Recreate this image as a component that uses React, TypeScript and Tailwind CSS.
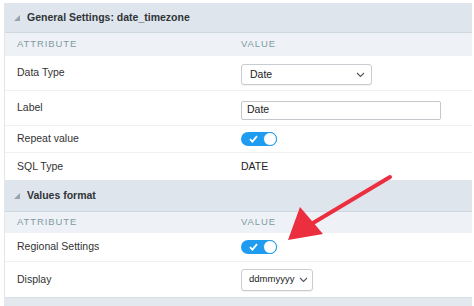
import type { ReactNode } from 'react';

const font = { fontFamily: '"Liberation Sans", Arial, sans-serif' };

function Corner() {
  return (
    <svg width="6" height="6" viewBox="0 0 6 6" className="mr-[7px] shrink-0">
      <polygon points="6,0 6,6 0,6" fill="#9aa3ab" />
    </svg>
  );
}

function SectionHeader({ title, h }: { title: string; h: string }) {
  return (
    <div className={`flex items-center border-b border-[#cfd7df] bg-[#dfe5ec] pl-[9px] ${h}`}>
      <Corner />
      <span className="text-[10.5px] font-bold text-[#2f3438]">{title}</span>
    </div>
  );
}

function ColHeader({ h }: { h: string }) {
  return (
    <div className={`grid grid-cols-[236px_1fr] items-center bg-[#eef2f6] text-[9.5px] tracking-[0.9px] text-[#7f9aa3] ${h}`}>
      <div className="pl-[12px]">ATTRIBUTE</div>
      <div>VALUE</div>
    </div>
  );
}

function Row({ label, h, children, last }: { label: string; h: string; children: ReactNode; last?: boolean }) {
  return (
    <div className={`grid grid-cols-[236px_1fr] items-center ${last ? '' : 'border-b border-[#eef0f2]'} ${h}`}>
      <div className="pl-[12px] text-[10.5px] text-[#333]">{label}</div>
      <div className="flex items-center">{children}</div>
    </div>
  );
}

function Chevron() {
  return (
    <svg width="9" height="6" viewBox="0 0 9 6" className="shrink-0">
      <path d="M1 1 L4.5 4.5 L8 1" fill="none" stroke="#555" strokeWidth="1.1" />
    </svg>
  );
}

function Toggle() {
  return (
    <div className="relative flex h-[14px] w-[36px] items-center rounded-full bg-[#1f9cf0]">
      <svg width="9" height="8" viewBox="0 0 9 8" className="ml-[8px]">
        <path d="M1 4.2 L3.4 6.6 L8 1.2" fill="none" stroke="#fff" strokeWidth="1.8" />
      </svg>
      <div className="absolute right-0 top-0 h-[14px] w-[14px] rounded-full border-[1.5px] border-[#1f9cf0] bg-white" />
    </div>
  );
}

export default function App() {
  return (
    <div className="h-[306px] w-[474px] overflow-hidden bg-white pl-[4px] pr-[2px] pt-[3px]" style={font}>
      <div className="border-l border-[#e3e6e9]">
        <SectionHeader title="General Settings: date_timezone" h="h-[30px]" />
        <ColHeader h="h-[23px]" />
        <Row label="Data Type" h="h-[35px]">
          <div className="mt-[3px] flex h-[21px] w-[131px] items-center justify-between rounded-[3px] border border-[#c9ccd0] bg-white pl-[8px] pr-[6px] text-[10.5px] text-[#222] shadow-[0_1px_1px_rgba(0,0,0,0.06)]">
            <span>Date</span>
            <Chevron />
          </div>
        </Row>
        <Row label="Label" h="h-[35px]">
          <div className="mt-[4px] flex h-[19px] w-[200px] items-center rounded-[2px] border border-[#c4c7cb] bg-white pl-[5px] text-[10.5px] text-[#222]">
            Date
          </div>
        </Row>
        <Row label="Repeat value" h="h-[27px]">
          <Toggle />
        </Row>
        <Row label="SQL Type" h="h-[27px]" last>
          <span className="text-[10.5px] text-[#222]">DATE</span>
        </Row>
        <SectionHeader title="Values format" h="h-[32px]" />
        <ColHeader h="h-[21px]" />
        <Row label="Regional Settings" h="h-[29px]">
          <Toggle />
        </Row>
        <Row label="Display" h="h-[35px]" last>
          <div className="flex h-[22px] w-[72px] items-center gap-[5px] rounded-[3px] border border-[#c9ccd0] bg-white pl-[7px] pr-[4px] text-[9.5px] text-[#222] shadow-[0_1px_1px_rgba(0,0,0,0.06)]">
            <span>ddmmyyyy</span>
            <Chevron />
          </div>
        </Row>
        <div className="h-[12px] border-t border-[#d6dde4] bg-[#e3e8ee]" />
      </div>
      <svg className="pointer-events-none absolute left-0 top-0" width="474" height="306" viewBox="0 0 474 306">
        <line x1="390" y1="177" x2="308" y2="226" stroke="#ec2f3f" strokeWidth="4" strokeLinecap="round" />
        <polygon points="288,240 300,207 323,234" fill="#ec2f3f" />
      </svg>
    </div>
  );
}
